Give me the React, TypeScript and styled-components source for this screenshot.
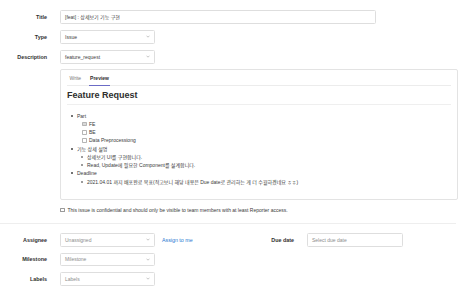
import React from 'react';
import styled, { createGlobalStyle } from 'styled-components';

const Global = createGlobalStyle`
  html, body { margin: 0; padding: 0; background: #fff; }
  body {
    font-family: "Liberation Sans", "Noto Sans CJK KR", sans-serif;
    color: #303030;
  }
  * { box-sizing: border-box; }
`;

const Page = styled.div`
  width: 474px;
  height: 294px;
  overflow: hidden;
  padding-top: 10px;
  display: flex;
  flex-direction: column;
`;

const Fields = styled.div`
  display: flex;
  flex-direction: column;
  gap: 6.5px;
`;

const Row = styled.div`
  display: flex;
  align-items: center;
  gap: 13px;
`;

const Label = styled.div<{ $w?: number }>`
  width: ${(p) => p.$w ?? 47}px;
  flex: none;
  text-align: right;
  font-size: 5.4px;
  font-weight: 700;
  color: #303030;
`;

const Box = styled.div<{ $w: number; $muted?: boolean }>`
  width: ${(p) => p.$w}px;
  height: 13.5px;
  flex: none;
  border: 1px solid #dedede;
  border-radius: 1.5px;
  padding: 0 4px;
  font-size: 5px;
  display: flex;
  align-items: center;
  justify-content: space-between;
  color: ${(p) => (p.$muted ? '#8c8c8c' : '#404040')};
  background: #fff;
`;

const Chevron = () => (
  <svg width="4" height="3" viewBox="0 0 4 3">
    <polyline points="0.5,0.7 2,2.2 3.5,0.7" fill="none" stroke="#a0a0a0" strokeWidth="0.6" />
  </svg>
);

const Select = ({ w, text, muted }: { w: number; text: string; muted?: boolean }) => (
  <Box $w={w} $muted={muted}>
    <span>{text}</span>
    <Chevron />
  </Box>
);

const Editor = styled.div`
  margin-left: 60px;
  margin-top: 5.5px;
  width: 398px;
  height: 131px;
  border: 1px solid #e3e3e3;
  border-radius: 2px;
  padding: 0 6px 0 6px;
`;

const Tabs = styled.div`
  display: flex;
  gap: 6px;
  height: 16px;
  border-bottom: 1px solid #ececec;
  padding-left: 1px;
`;

const Tab = styled.div<{ $active?: boolean }>`
  font-size: 5px;
  display: flex;
  align-items: center;
  padding: 1px 1.5px 0;
  border-bottom: 1px solid ${(p) => (p.$active ? '#6b6bc6' : 'transparent')};
  margin-bottom: -1px;
  font-weight: ${(p) => (p.$active ? 700 : 400)};
  color: ${(p) => (p.$active ? '#303030' : '#7a7a7a')};
`;

const Heading = styled.h2`
  margin: 0;
  padding: 4px 0 3px;
  font-size: 9px;
  line-height: 11px;
  font-weight: 700;
  color: #2e2e2e;
  border-bottom: 1px solid #efefef;
`;

const List = styled.ul<{ $indent: number }>`
  list-style: none;
  margin: 0;
  padding: 0 0 0 ${(p) => p.$indent}px;
`;

const TopList = styled(List)`
  margin-top: 6.5px;
`;

const Item = styled.li<{ $marker: 'disc' | 'circle' | 'none' }>`
  position: relative;
  font-size: 5px;
  line-height: 8.25px;
  color: #3a3a3a;
  &::before {
    content: '';
    position: absolute;
    left: -6px;
    top: 3.2px;
    width: 2px;
    height: 2px;
    border-radius: 50%;
    display: ${(p) => (p.$marker === 'none' ? 'none' : 'block')};
    background: ${(p) => (p.$marker === 'disc' ? '#444' : 'transparent')};
    border: ${(p) => (p.$marker === 'circle' ? '0.5px solid #555' : 'none')};
    box-sizing: border-box;
  }
`;

const TaskBox = styled.span<{ $checked?: boolean }>`
  display: inline-block;
  width: 4.5px;
  height: 4.5px;
  border: 0.6px solid #b5b5b5;
  border-radius: 0.8px;
  background: ${(p) => (p.$checked ? '#d9d9d9' : '#fff')};
  vertical-align: -0.5px;
  margin-right: 2.5px;
`;

const Confidential = styled.div`
  display: flex;
  align-items: center;
  gap: 3px;
  margin: 7px 0 0 60px;
  font-size: 5px;
  color: #3a3a3a;
  height: 6px;
`;

const CheckSquare = styled.span`
  width: 4.5px;
  height: 4.5px;
  border: 0.6px solid #9a9a9a;
  border-radius: 0.6px;
  flex: none;
`;

const Divider = styled.div`
  width: 456px;
  height: 1px;
  background: #eeeeee;
  margin-top: 9.5px;
`;

const Bottom = styled.div`
  display: flex;
  padding-top: 9.5px;
`;

const Column = styled.div<{ $w?: number }>`
  display: flex;
  flex-direction: column;
  gap: 6px;
  width: ${(p) => (p.$w ? `${p.$w}px` : 'auto')};
  flex: none;
`;

const LinkText = styled.a`
  font-size: 5.3px;
  color: #1f78d1;
  text-decoration: none;
  margin-left: -6px;
`;

export default function App() {
  return (
    <>
      <Global />
      <Page>
        <Fields>
          <Row>
            <Label>Title</Label>
            <Box $w={316}>[feat] : 상세보기 기능 구현</Box>
          </Row>
          <Row>
            <Label>Type</Label>
            <Select w={95} text="Issue" />
          </Row>
          <Row>
            <Label>Description</Label>
            <Select w={95} text="feature_request" />
          </Row>
        </Fields>
        <Editor>
          <Tabs>
            <Tab>Write</Tab>
            <Tab $active>Preview</Tab>
          </Tabs>
          <Heading>Feature Request</Heading>
          <TopList $indent={10}>
            <Item $marker="disc">
              Part
              <List $indent={5}>
                <Item $marker="none"><TaskBox $checked />FE</Item>
                <Item $marker="none"><TaskBox />BE</Item>
                <Item $marker="none"><TaskBox />Data Preprocessiong</Item>
              </List>
            </Item>
            <Item $marker="disc">
              기능 상세 설명
              <List $indent={10}>
                <Item $marker="circle">상세보기 UI를 구현합니다.</Item>
                <Item $marker="circle">Read, Update에 필요한 Component를 설계합니다.</Item>
              </List>
            </Item>
            <Item $marker="disc">
              Deadline
              <List $indent={10}>
                <Item $marker="circle">
                  2021.04.01 까지 배포완료 목표(적고보니 해당 내용은 Due date로 관리하는 게 더 수월하겠네요 ㅎㅎ)
                </Item>
              </List>
            </Item>
          </TopList>
        </Editor>
        <Confidential>
          <CheckSquare />
          This issue is confidential and should only be visible to team members with at least Reporter access.
        </Confidential>
        <Divider />
        <Bottom>
          <Column $w={247}>
            <Row>
              <Label>Assignee</Label>
              <Select w={95} text="Unassigned" muted />
              <LinkText>Assign to me</LinkText>
            </Row>
            <Row>
              <Label>Milestone</Label>
              <Select w={95} text="Milestone" muted />
            </Row>
            <Row>
              <Label>Labels</Label>
              <Select w={95} text="Labels" muted />
            </Row>
          </Column>
          <Column>
            <Row>
              <Label>Due date</Label>
              <Box $w={96} $muted>Select due date</Box>
            </Row>
          </Column>
        </Bottom>
      </Page>
    </>
  );
}
